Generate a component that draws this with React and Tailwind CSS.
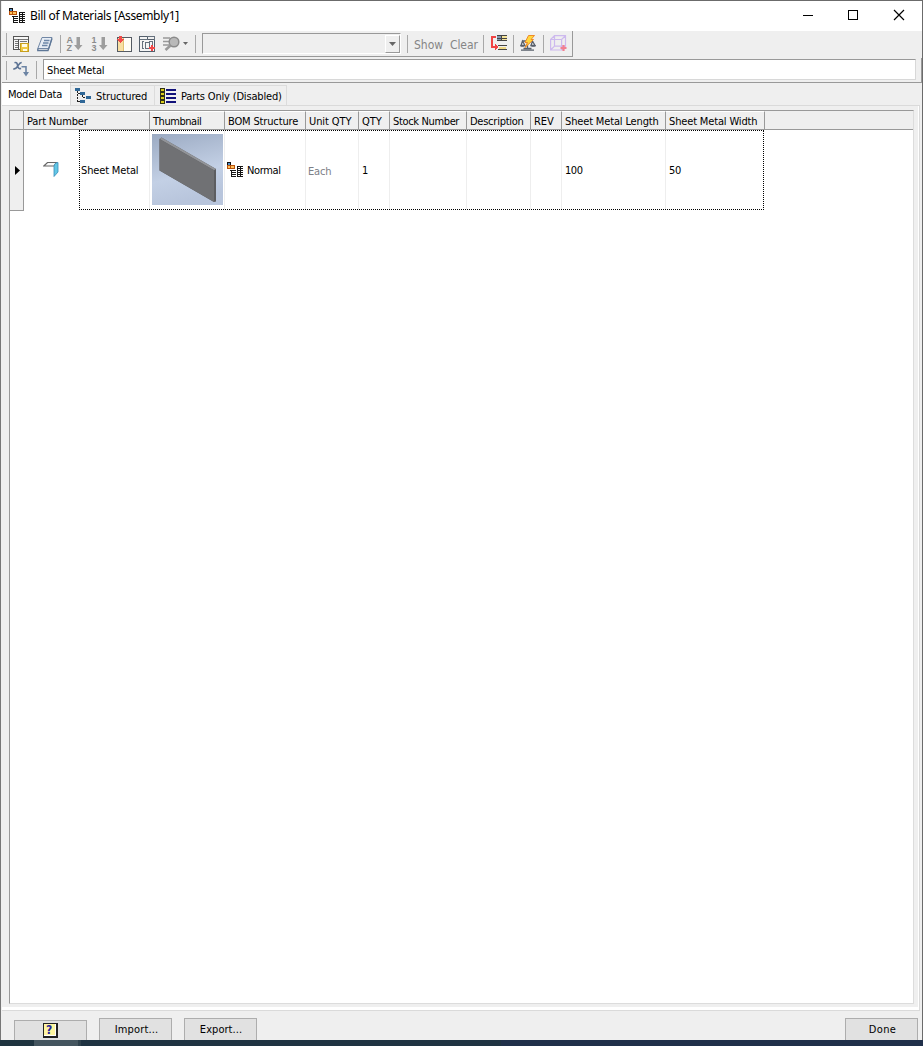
const tahoma = "font-['DejaVu_Sans_Condensed','DejaVu_Sans',sans-serif] [font-stretch:condensed] whitespace-nowrap";

function BomIcon({ className = "" }) {
  return (
    <svg className={`w-4 h-4 shrink-0 ${className}`} viewBox="0 0 16 16" shapeRendering="crispEdges">
      <rect x="0" y="0" width="4" height="4" fill="#111" />
      <rect x="1" y="1" width="2" height="2" fill="#4f8fcb" />
      <rect x="0" y="3" width="4" height="4" fill="#b8500a" />
      <rect x="1" y="4" width="2" height="2" fill="#ffc35c" />
      <rect x="3" y="3" width="5" height="4" fill="#b8500a" />
      <rect x="4" y="4" width="3" height="2" fill="#ffc35c" />
      <path d="M3 8.500h6M4 10.500h5M4 12.500h5M4 14.500h5M10 4.500h6M10 6.500h6M10 8.500h6M10 10.500h6M10 12.500h6M10 14.500h6" stroke="#161616" />
      <path d="M4.500 8v7M10.500 4v11M13.500 4v11" stroke="#161616" />
    </svg>
  );
}

function SaveTemplateIcon() {
  return (
    <svg className="w-4 h-4" viewBox="0 0 16 16" shapeRendering="crispEdges">
      <rect x=".5" y=".5" width="15" height="13" fill="#f7f7f7" stroke="#555" />
      <path d="M1 3.500h14M2 5.500h3M7 5.500h7M2 7.500h3M2 9.500h3M2 11.500h3" stroke="#777" />
      <path d="M5.500 3v11" stroke="#555" />
      <rect x="7" y="7" width="9" height="9" fill="#c79f1e" />
      <rect x="8" y="8" width="7" height="7" fill="#efca45" />
      <rect x="9" y="8" width="5" height="3" fill="#fffbe6" />
      <rect x="10" y="13" width="4" height="2" fill="#fffbe6" />
    </svg>
  );
}

function EngineerNotebookIcon() {
  return (
    <svg className="w-4 h-4" viewBox="0 0 16 16">
      <path d="M5 1.500h10L12 12.500H.8z" fill="#e7edf5" stroke="#7187a5" />
      <path d="M.8 12.500v2H11l4-12" fill="none" stroke="#5e7797" strokeWidth="1.400" />
      <path d="M7 4.500h5.500M6 7h5.500M5 9.500h5.500" stroke="#6c86a8" strokeWidth="1.300" />
    </svg>
  );
}

function SortIcon({ top, bottom }) {
  return (
    <svg className="w-4 h-4 overflow-visible" viewBox="0 0 16 16">
      <text x="-.5" y="7" className="font-['Liberation_Sans',sans-serif] text-[9px] font-bold" fill="#8c8c8c">{top}</text>
      <text x="-.5" y="15" className="font-['Liberation_Sans',sans-serif] text-[9px] font-bold" fill="#8c8c8c">{bottom}</text>
      <path d="M9.500 1h3.500v8h2.500L11.200 14 7 9h2.500z" fill="#9d9d9d" />
    </svg>
  );
}

function AddColumnIcon() {
  return (
    <svg className="w-4 h-4" viewBox="0 0 16 16" shapeRendering="crispEdges">
      <rect x="1.500" y="1.500" width="14" height="14" fill="#fff" stroke="#555b63" />
      <rect x="9" y="3" width="6" height="12" fill="#fffdf5" />
      <rect x="2" y="2" width="5" height="13" fill="#f8dfa2" />
      <path d="M7.500 2v13" stroke="#e0c070" />
      <path d="M3 0h3v3h3L4.500 7 0 3h3z" fill="#f04a4a" />
    </svg>
  );
}

function AddCustomColumnIcon() {
  return (
    <svg className="w-4 h-4" viewBox="0 0 16 16" shapeRendering="crispEdges">
      <path d="M.5.500h8v3h6.500v12H.5z" fill="#f5f5f5" stroke="#55606c" />
      <path d="M8 .5h7v3M1 3.500h8M5 5.500H3.500v7H5M6.500 6.500h4v6h-4zM10 5.500h3v4" fill="none" stroke="#66717d" />
      <path d="M13 9v6M10 12h6" stroke="#f04848" strokeWidth="2" />
    </svg>
  );
}

function FindIcon() {
  return (
    <svg className="w-[17px] h-4" viewBox="0 0 17 16">
      <path d="M0 2h7M0 5.500h6M0 9h6" stroke="#999" strokeWidth="1.600" />
      <circle cx="11" cy="6" r="4.800" fill="#b9b9b9" stroke="#8a8a8a" strokeWidth="1.500" />
      <path d="M7.500 9.500L2.500 14" stroke="#999" strokeWidth="2.600" />
    </svg>
  );
}

function RenumberIcon() {
  return (
    <svg className="w-4 h-4" viewBox="0 0 16 16" shapeRendering="crispEdges">
      <path d="M5 2H1v10h3M1 7h1" fill="none" stroke="#f04444" strokeWidth="2" />
      <path d="M3.500 8.500L7 12l-3.500 3.500z" fill="#f04444" />
      <rect x="6" y="1" width="5" height="5" fill="#8398b0" />
      <rect x="11" y="1" width="5" height="5" fill="#f5e49b" />
      <path d="M6 .5h10M6 3.500h10M6 5.500h10M7 10.500h9M7 14.500h9M10.500 1v5" stroke="#444" />
      <path d="M8 12.500h7" stroke="#f0d985" strokeWidth="2" />
    </svg>
  );
}

function EquivalenceIcon() {
  return (
    <svg className="w-4 h-4" viewBox="0 0 16 16">
      <path d="M1 15.200h13M3.500 13.500h8M2.500 6L1 10.500h4zM12.500 6L11 10.500h4zM2 6h11M7.500 6v8" fill="none" stroke="#59616c" strokeWidth="1.300" />
      <path d="M0 10.300h5c-.5 2-4.500 2-5 0zM10.500 10.300H16c-.5 2-5 2-5.500 0z" fill="#59616c" />
      <path d="M8.500 .5h6L11 4.500h2.500L5 12.500 7.500 7.500H5z" fill="#ffd83c" stroke="#ee8a28" />
    </svg>
  );
}

function VirtualCubeIcon() {
  return (
    <svg className="w-[17px] h-4" viewBox="0 0 17 16">
      <path d="M.6 4.500h11v10.500H.6zM4.500.6h11v10.500h-11zM.6 4.500L4.500.6M11.600 4.500L15.500.6M.6 15l3.900-3.900M11.600 15l3.900-3.900" fill="none" stroke="#cdb9ee" strokeWidth="1.200" />
      <path d="M13.500 10v6M10.500 13h6" stroke="#f28090" strokeWidth="2.200" />
    </svg>
  );
}

function FormulaIcon() {
  return (
    <svg className="w-4 h-4 block" viewBox="0 0 16 16">
      <path d="M1.500 1.800C4 .8 4.200 2.500 4.600 4.500S5.500 8.500 8 7.200M8.700 1.500C6.500 1.500 5.500 4 4.500 5.500S2 8.300.3 7.700" fill="none" stroke="#5c7394" strokeWidth="1.600" />
      <path d="M8.500 5.800H13v6" fill="none" stroke="#6c84a4" strokeWidth="1.600" />
      <path d="M10 11h6l-3 4.500z" fill="#6c84a4" />
    </svg>
  );
}

function StructuredIcon() {
  return (
    <svg className="w-4 h-4" viewBox="0 0 16 16" shapeRendering="crispEdges">
      <path d="M2.500 3v11M3 5.500h3M3 13.500h3M7.500 7v3M8 9.500h3" fill="none" stroke="#222" strokeDasharray="2 1" />
      <rect x="0" y="0" width="5" height="3" fill="#2f6797" />
      <rect x="5" y="4" width="5" height="3" fill="#2f6797" />
      <rect x="5" y="12" width="5" height="3" fill="#2f6797" />
      <rect x="11" y="8" width="5" height="3" fill="#2f6797" />
    </svg>
  );
}

function PartsOnlyIcon() {
  return (
    <svg className="w-4 h-4" viewBox="0 0 16 16" shapeRendering="crispEdges">
      <path d="M6 2h10M6 6h10M6 10h10M6 14h10" stroke="#12127a" strokeWidth="2" />
      <path d="M2.500 0v16" stroke="#303016" strokeWidth="5" />
      <path d="M1 2h3M1 6h3M1 10h3M1 14h3" stroke="#dacd1c" strokeWidth="2" />
    </svg>
  );
}

function SheetMetalIcon() {
  return (
    <svg className="w-4 h-4" viewBox="0 0 16 16">
      <path d="M.8 5L4.500 1.500h9L11 5z" fill="#fafafa" stroke="#666" strokeWidth="1.200" />
      <path d="M11 5.300C11 3 13 1.500 15 1.500V11l-4 4.500z" fill="#62c7e5" stroke="#398dbb" strokeWidth=".8" />
    </svg>
  );
}

function Thumbnail() {
  return (
    <svg className="w-[71px] h-[71px]" viewBox="0 0 71 71">
      <defs>
        <linearGradient id="sky" x1="0" y1="0" x2=".25" y2="1">
          <stop offset="0" stopColor="#9baac2" />
          <stop offset=".65" stopColor="#c3d0e5" />
          <stop offset="1" stopColor="#b8c5dc" />
        </linearGradient>
      </defs>
      <rect width="71" height="71" fill="url(#sky)" />
      <path d="M7.500 5L9.500 3.500 64 35v32.500l-2 .5L7.500 36.500z" fill="#5c5d60" />
      <path d="M7.500 5L9.500 3.500 64 35l-2 1.300z" fill="#929498" />
      <path d="M7.500 5L62 36.300V68L7.500 36.500z" fill="#707174" />
    </svg>
  );
}

function Separator() {
  return <div className="w-px h-[18px] bg-[#a8a8a8] shrink-0" />;
}

function Slot({ width, children }) {
  return <div className={`${width} h-[18px] flex items-center shrink-0`}>{children}</div>;
}

const columns = [
  { label: "Part Number", width: "w-[126px]", tracking: "tracking-[-0.15px]" },
  { label: "Thumbnail", width: "w-[75px]", tracking: "tracking-[-0.45px]" },
  { label: "BOM Structure", width: "w-[81px]", tracking: "tracking-[-0.15px]" },
  { label: "Unit QTY", width: "w-[53px]", tracking: "tracking-[-0.1px]" },
  { label: "QTY", width: "w-[31px]", tracking: "tracking-[-0.1px]" },
  { label: "Stock Number", width: "w-[77px]", tracking: "tracking-[-0.35px]" },
  { label: "Description", width: "w-[64px]", tracking: "tracking-[-0.25px]" },
  { label: "REV", width: "w-[31px]", tracking: "tracking-[-0.1px]" },
  { label: "Sheet Metal Length", width: "w-[104px]", tracking: "tracking-[-0.15px]" },
  { label: "Sheet Metal Width", width: "w-[99px]", tracking: "tracking-[-0.15px]" },
];

function TitleBar() {
  return (
    <div className="h-[30px] bg-white flex items-center pl-[7px]">
      <BomIcon className="-mt-px" />
      <span className="ml-[5px] font-['Noto_Sans',sans-serif] text-[12px] leading-[16px] tracking-[-0.34px] whitespace-nowrap">Bill of Materials [Assembly1]</span>
      <svg className="ml-auto mr-[17px] w-[103px] h-3 -mt-[2px]" viewBox="0 0 103 12" fill="none" stroke="#000" shapeRendering="crispEdges">
        <path d="M1 6.500h10" />
        <rect x="46.500" y="1.500" width="9" height="9" />
        <path d="M92 1l10 10M102 1L92 11" shapeRendering="auto" strokeWidth="1.200" />
      </svg>
    </div>
  );
}

function Toolbar() {
  return (
    <div className="h-[27px] flex bg-[#efefef]">
      <div className="w-[571px] h-[26px] border-b border-r border-[#999] flex items-center pl-[4px]">
        <div className="w-px h-[22px] bg-[#aaa] mr-[6px]" />
        <div className="flex items-center">
          <Slot width="w-6"><SaveTemplateIcon /></Slot>
          <Slot width="w-[23px]"><EngineerNotebookIcon /></Slot>
          <Separator />
          <Slot width="w-[31px]"><span className="ml-[6px]"><SortIcon top="A" bottom="Z" /></span></Slot>
          <Slot width="w-[24px]"><SortIcon top="1" bottom="3" /></Slot>
          <Slot width="w-[23px]"><AddColumnIcon /></Slot>
          <Slot width="w-6"><AddCustomColumnIcon /></Slot>
          <Slot width="w-[20px]"><FindIcon /></Slot>
          <svg className="w-[5px] h-[3px] mr-[7px]" viewBox="0 0 5 3"><path d="M0 0h5L2.500 3z" fill="#666" /></svg>
          <Separator />
        </div>
        <div className="ml-[6px] w-[199px] h-[21px] border border-t-[#999] border-l-[#999] border-white flex justify-end items-center">
          <div className="w-[15px] h-[18px] border border-white border-r-[#999] border-b-[#999] flex items-center justify-center">
            <svg className="w-[7px] h-1" viewBox="0 0 7 4"><path d="M0 0h7L3.500 4z" fill="#666" /></svg>
          </div>
        </div>
        <div className="w-[6px]" />
        <Separator />
        <span className={`${tahoma} ml-[6px] w-[36px] text-[12px] leading-4 text-[#858585] mt-[2px]`}>Show</span>
        <span className={`${tahoma} w-[33px] text-[12px] leading-4 tracking-[-0.1px] text-[#858585] mt-[2px]`}>Clear</span>
        <Separator />
        <Slot width="w-[29px]"><span className="ml-[7px] -mt-px"><RenumberIcon /></span></Slot>
        <Separator />
        <Slot width="w-[29px]"><span className="ml-[6px] -mt-px"><EquivalenceIcon /></span></Slot>
        <Separator />
        <Slot width="w-[25px]"><span className="ml-[6px] -mt-px"><VirtualCubeIcon /></span></Slot>
      </div>
    </div>
  );
}

function FormulaBar() {
  return (
    <div className="h-[25px] flex pt-px bg-[#efefef] border-b border-r border-[#999]">
      <div className="ml-[4px] mt-[2px] w-px h-[19px] bg-[#aaa]" />
      <div className="ml-[6px] mt-[2px]"><FormulaIcon /></div>
      <div className="ml-[7px] mt-[2px] w-px h-[18px] bg-[#a8a8a8]" />
      <div className={`${tahoma} ml-[6px] mr-[5px] flex-1 h-[21px] bg-white border border-t-[#999] border-l-[#999] border-[#d8d8d8] pl-[3px] pt-[2px] text-[11px] leading-[17px] tracking-[-0.15px]`}>Sheet Metal</div>
    </div>
  );
}

function Tabs() {
  return (
    <div className={`${tahoma} h-[22px] flex bg-[#efefef] text-[11px] leading-[16px]`}>
      <div className="w-[69px] h-[22px] bg-white border-r border-[#d8d8d8] pl-[6px] pt-[4px] tracking-[-0.25px]">Model Data</div>
      <div className="mt-[2px] h-[20px] w-[84px] border-t border-r border-[#dcdcdc] flex items-center pl-[4px]">
        <StructuredIcon /><span className="ml-[5px] mt-[2px] tracking-[-0.1px]">Structured</span>
      </div>
      <div className="mt-[2px] h-[20px] w-[132px] border-t border-r border-[#dcdcdc] flex items-center pl-[5px]">
        <PartsOnlyIcon /><span className="ml-[5px] mt-[2px] tracking-[-0.17px]">Parts Only (Disabled)</span>
      </div>
    </div>
  );
}

function BomTable() {
  return (
    <div className={`${tahoma} h-[894px] w-[905px] border border-t-[#999] border-l-[#999] border-[#dcdcdc] bg-white text-[11px] leading-[16px]`}>
      <div className="h-[19px] flex bg-[#efefef] border-b border-[#999]">
        <div className="w-[14px] border-r border-[#999]" />
        {columns.map((c) => (
          <div key={c.label} className={`${c.width} ${c.tracking} shrink-0 border-t border-t-white border-r border-r-[#999] pl-[3px] pt-[2px]`}>{c.label}</div>
        ))}
      </div>
      <div className="flex h-[81px]">
        <div className="w-[14px] h-[81px] bg-[#efefef] border-r border-b border-[#999] flex items-center pl-[5px]">
          <svg className="w-[5px] h-[9px]" viewBox="0 0 5 9"><path d="M0 0l5 4.500L0 9z" /></svg>
        </div>
        <div className="w-[55px] h-[80px] flex items-center pl-[19px] pb-[2px]"><SheetMetalIcon /></div>
        <div className="w-[685px] h-[80px] border border-dotted border-black flex items-center">
          <div className="w-[70px] h-full border-r border-[#eee] flex items-center pt-px pl-[1px] tracking-[-0.15px]">Sheet Metal</div>
          <div className="w-[75px] h-full border-r border-[#eee] flex items-start pt-[3px] pl-[2px]"><Thumbnail /></div>
          <div className="w-[81px] h-full border-r border-[#eee] flex items-center pl-[2px]"><BomIcon /><span className="ml-[4px] mt-px tracking-[-0.35px]">Normal</span></div>
          <div className="w-[53px] h-full border-r border-[#eee] flex items-center pl-[2px] pt-[3px] tracking-[-0.15px] text-[#7d8087]">Each</div>
          <div className="w-[31px] h-full border-r border-[#eee] flex items-center pt-px pl-[3px]">1</div>
          <div className="w-[77px] h-full border-r border-[#eee]" />
          <div className="w-[64px] h-full border-r border-[#eee]" />
          <div className="w-[31px] h-full border-r border-[#eee]" />
          <div className="w-[104px] h-full border-r border-[#eee] flex items-center pt-px pl-[3px] tracking-[-0.45px]">100</div>
          <div className="h-full flex items-center pt-px pl-[3px] tracking-[-0.4px]">50</div>
        </div>
      </div>
    </div>
  );
}

const buttonBase = `${tahoma} border border-b-0 border-[#adadad] bg-[#e1e1e1] w-[73px] flex justify-center text-[11px] leading-[16px]`;

function Footer() {
  return (
    <div className="h-[29px] flex items-end pl-[12px] pr-[4px] bg-[#efefef]">
      <div className={`${buttonBase} h-[20px] pt-px pr-[2px]`}>
        <svg className="w-4 h-4" viewBox="0 0 16 16" shapeRendering="crispEdges">
          <rect x="1" y="1" width="15" height="15" rx="1" fill="#222" />
          <rect x="1" y="1" width="13" height="13" fill="#fff" stroke="#222" />
          <rect x="2" y="2" width="11" height="11" fill="#fff6a0" />
          <text x="4" y="12" className="font-['DejaVu_Sans',sans-serif] text-[12px] font-bold" fill="#22229a">?</text>
        </svg>
      </div>
      <div className={`${buttonBase} h-[22px] ml-[12px] pt-[3px] pl-[2px] tracking-[0.15px]`}>Import...</div>
      <div className={`${buttonBase} h-[22px] ml-[12px] pt-[3px] pl-px tracking-[0.05px]`}>Export...</div>
      <div className={`${buttonBase} h-[22px] ml-auto pt-[3px] pl-[2px] tracking-[0.4px]`}>Done</div>
    </div>
  );
}

export default function App() {
  return (
    <div className="w-[923px] h-[1046px] overflow-hidden bg-[#efefef] text-black flex flex-col">
      <div className="h-[1040px] border-t border-r border-[#6b6b6b] flex">
        <div className="w-[2px] bg-[#efefef] border-l border-[#777]" />
        <div className="flex-1 flex flex-col">
          <TitleBar />
          <Toolbar />
          <FormulaBar />
          <Tabs />
          <div className="h-[906px] w-[918px] border-t border-r border-b border-[#dadada] pr-px pb-[3px] bg-white">
            <div className="h-full bg-[#efefef] pl-[7px] pt-[4px]">
              <BomTable />
            </div>
          </div>
          <Footer />
        </div>
      </div>
      <div className="h-[6px] flex bg-[#20304a]">
        <div className="w-[34px] bg-[#1f3440]" />
        <div className="w-[44px] bg-[#44555f]" />
        <div className="w-[3px] bg-[#2e414c]" />
        <div className="w-[420px] bg-[#1f3342]" />
      </div>
    </div>
  );
}
